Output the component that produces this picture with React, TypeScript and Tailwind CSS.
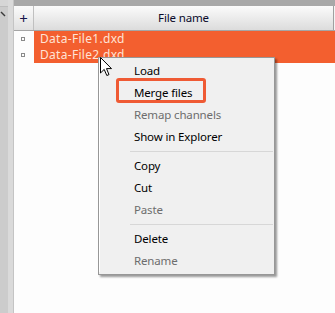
import React from "react";

const ROWS = ["Data-File1.dxd", "Data-File2.dxd"];

type Item = { label: string; disabled?: boolean } | "sep";

const MENU: Item[] = [
  { label: "Load" },
  { label: "Merge files" },
  { label: "Remap channels", disabled: true },
  { label: "Show in Explorer" },
  "sep",
  { label: "Copy" },
  { label: "Cut" },
  { label: "Paste", disabled: true },
  "sep",
  { label: "Delete" },
  { label: "Rename", disabled: true },
];

function Cursor() {
  return (
    <svg width="13" height="20" viewBox="0 0 13 20" className="absolute left-[100px] top-[57px]">
      <path
        d="M0.5 0.5 L0.5 16 L4.2 12.4 L6.8 18.5 L9 17.6 L6.5 11.6 L11.5 11.6 Z"
        fill="#ffffff"
        stroke="#000000"
        strokeWidth="1"
        strokeLinejoin="miter"
      />
    </svg>
  );
}

function ContextMenu() {
  return (
    <div className="absolute left-[98px] top-[57px] w-[177px] border border-[#979797] bg-[#f0f0f0] py-[2px] text-[11.5px] tracking-[-0.15px] shadow-[2px_2px_2px_rgba(0,0,0,0.4)]">
      <div className="border-l border-white">
        {MENU.map((item, i) =>
          item === "sep" ? (
            <div key={i} className="flex h-[7px] items-center pl-[30px] pr-[1px]">
              <div className="h-px w-full bg-[#d7d7d7]" />
            </div>
          ) : (
            <div
              key={i}
              className={
                "flex h-[22px] items-center pl-[34px] " +
                (item.disabled ? "text-[#6d6d6d]" : "text-black")
              }
            >
              {item.label}
            </div>
          )
        )}
      </div>
      <div className="absolute left-[17px] top-[20px] h-[25px] w-[90px] rounded-[3px] border-[3px] border-[#ef5a34]" />
    </div>
  );
}

export default function App() {
  return (
    <div
      className="relative flex h-[313px] w-[335px] overflow-hidden bg-[#fdfdfd] text-[12px]"
      style={{ fontFamily: '"Noto Sans", "Liberation Sans", sans-serif' }}
    >
      {/* left splitter strip */}
      <div className="flex w-[8px] flex-col bg-[#cccccc]">
        <div className="h-[7px] border-b border-[#bdbdbd] bg-[#d6d6d6]" />
        <svg width="8" height="10" viewBox="0 0 8 10" className="mt-[4px]">
          <path d="M1 1 L5 5" stroke="#3a3a3a" strokeWidth="1.5" />
        </svg>
      </div>
      <div className="w-[5px] bg-[#dadada]" />
      <div className="w-px bg-[#c4c4c4]" />

      {/* file table */}
      <div className="flex flex-1 flex-col">
        <div className="h-[6px] bg-[#a8a8a8]" />
        <div className="flex h-[25px] border-b border-[#a5a5a5]">
          <div className="flex w-[20px] items-center justify-center border-r border-[#c0c0c0] bg-gradient-to-b from-[#fbfbfb] to-[#e0e0e0] text-[15px] text-[#14144a]">
            +
          </div>
          <div className="flex flex-1 items-center justify-center border-r border-[#a0a0a0] bg-gradient-to-b from-[#fbfbfb] to-[#dcdcdc] text-[11.5px] tracking-[-0.15px] text-[#0a0a2a]">
            File name
          </div>
          <div className="w-[1px] bg-[#f4f4f4]" />
        </div>
        {ROWS.map((name) => (
          <div key={name} className="flex h-[16px]">
            <div className="flex w-[20px] items-center justify-center">
              <div className="ml-[-3px] h-[4px] w-[4px] border border-[#8a8a8a]" />
            </div>
            <div className="flex flex-1 items-center bg-[#f35f2f] pl-[6px] leading-none tracking-[0.3px] text-[#ffe3d5]">
              {name}
            </div>
          </div>
        ))}
      </div>

      <ContextMenu />
      <Cursor />
    </div>
  );
}
